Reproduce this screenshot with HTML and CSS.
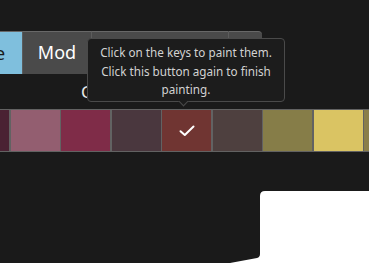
FILE: index.html
```html
<!DOCTYPE html>
<html>
<head>
<meta charset="utf-8">
<link rel="stylesheet" href="styles.css">
</head>
<body>
<div class="stage">
  <div class="modes">
    <div class="mode mode-active"><span class="cut">e</span></div>
    <div class="mode mode-mod">Mod</div>
    <div class="mode mode-wide"></div>
    <div class="mode mode-last"></div>
  </div>
  <div class="label">Color</div>
  <div class="swatches">
    <div class="swatch c0"></div>
    <div class="swatch c1"></div>
    <div class="swatch c2"></div>
    <div class="swatch c3"></div>
    <div class="swatch c4 selected">
      <svg class="check" width="16" height="12" viewBox="0 0 16 12"><path d="M1.5 6.2 L5.8 10 L14.5 1.5" fill="none" stroke="#fff" stroke-width="2" stroke-linecap="round" stroke-linejoin="round"/></svg>
    </div>
    <div class="swatch c5"></div>
    <div class="swatch c6"></div>
    <div class="swatch c7"></div>
    <div class="swatch c8"></div>
  </div>
  <svg class="keyboard" width="141" height="72" viewBox="0 0 141 72"><path d="M32 5 Q32 0 37 0 L141 0 L141 72 L2 72 L29 67 Q32 66 32 63 Z" fill="#ffffff"/></svg>
  <div class="tooltip">
    <p>Click on the keys to paint them.</p>
    <p>Click this button again to finish</p>
    <p>painting.</p>
  </div>
</div>
</body>
</html>
```
FILE: styles.css
```css
html, body {
  margin: 0;
  padding: 0;
  background: #1a1a1a;
  overflow: hidden;
}
.stage {
  position: relative;
  width: 369px;
  height: 263px;
  overflow: hidden;
  padding-top: 31px;
  box-sizing: border-box;
  font-family: "Noto Sans", "Open Sans", sans-serif;
}
.modes {
  display: flex;
  height: 43px;
  width: 262px;
}
.mode {
  box-sizing: border-box;
  height: 43px;
  border-top: 1px solid #686868;
  border-left: 1px solid #5c5c5c;
  background: #4a4a4a;
  color: #ffffff;
  font-size: 18px;
  display: flex;
  align-items: center;
  justify-content: center;
}
.mode-active {
  width: 22px;
  background: #7fbfdd;
  border-left: none;
  color: #1a1a1a;
  justify-content: flex-start;
  overflow: hidden;
}
.cut {
  margin-left: -5px;
}
.mode-mod {
  width: 69px;
  padding-bottom: 2px;
}
.mode-wide {
  width: 137px;
}
.mode-last {
  width: 34px;
  border-top-right-radius: 4px;
}
.label {
  height: 35px;
  line-height: 35px;
  padding-left: 81px;
  color: #e8e8e8;
  font-size: 17px;
}
.swatches {
  display: flex;
  gap: 1.5px;
  padding: 1px 0;
  margin-left: -40px;
  width: 460px;
  height: 43px;
  box-sizing: border-box;
  background: #626262;
}
.swatch {
  flex: 0 0 49px;
  display: flex;
  align-items: center;
  justify-content: center;
}
.c0 { background: #4a2233; }
.c1 { background: #935e70; }
.c2 { background: #7f2c48; }
.c3 { background: #4a373e; }
.c4 { background: #703532; }
.c5 { background: #4e403f; }
.c6 { background: #867d48; }
.c7 { background: #dac463; }
.c8 { background: #8a7e4a; }
.check {
  display: block;
  margin-left: 1px;
}
.keyboard {
  display: block;
  margin-top: 39px;
  margin-left: 228px;
}
.tooltip {
  position: absolute;
  left: 87px;
  top: 38px;
  width: 198px;
  height: 64px;
  box-sizing: border-box;
  background: #1c1c1c;
  border: 1px solid #4a4a4a;
  border-radius: 4px;
  padding-top: 4px;
  color: #d2d2d2;
  font-size: 11.7px;
  text-align: center;
}
.tooltip p {
  margin: 0;
  line-height: 18.5px;
}
.tooltip::after {
  content: "";
  position: absolute;
  left: 92px;
  bottom: -4px;
  width: 6px;
  height: 6px;
  background: #1c1c1c;
  border-right: 1px solid #4a4a4a;
  border-bottom: 1px solid #4a4a4a;
  transform: rotate(45deg);
}
```
